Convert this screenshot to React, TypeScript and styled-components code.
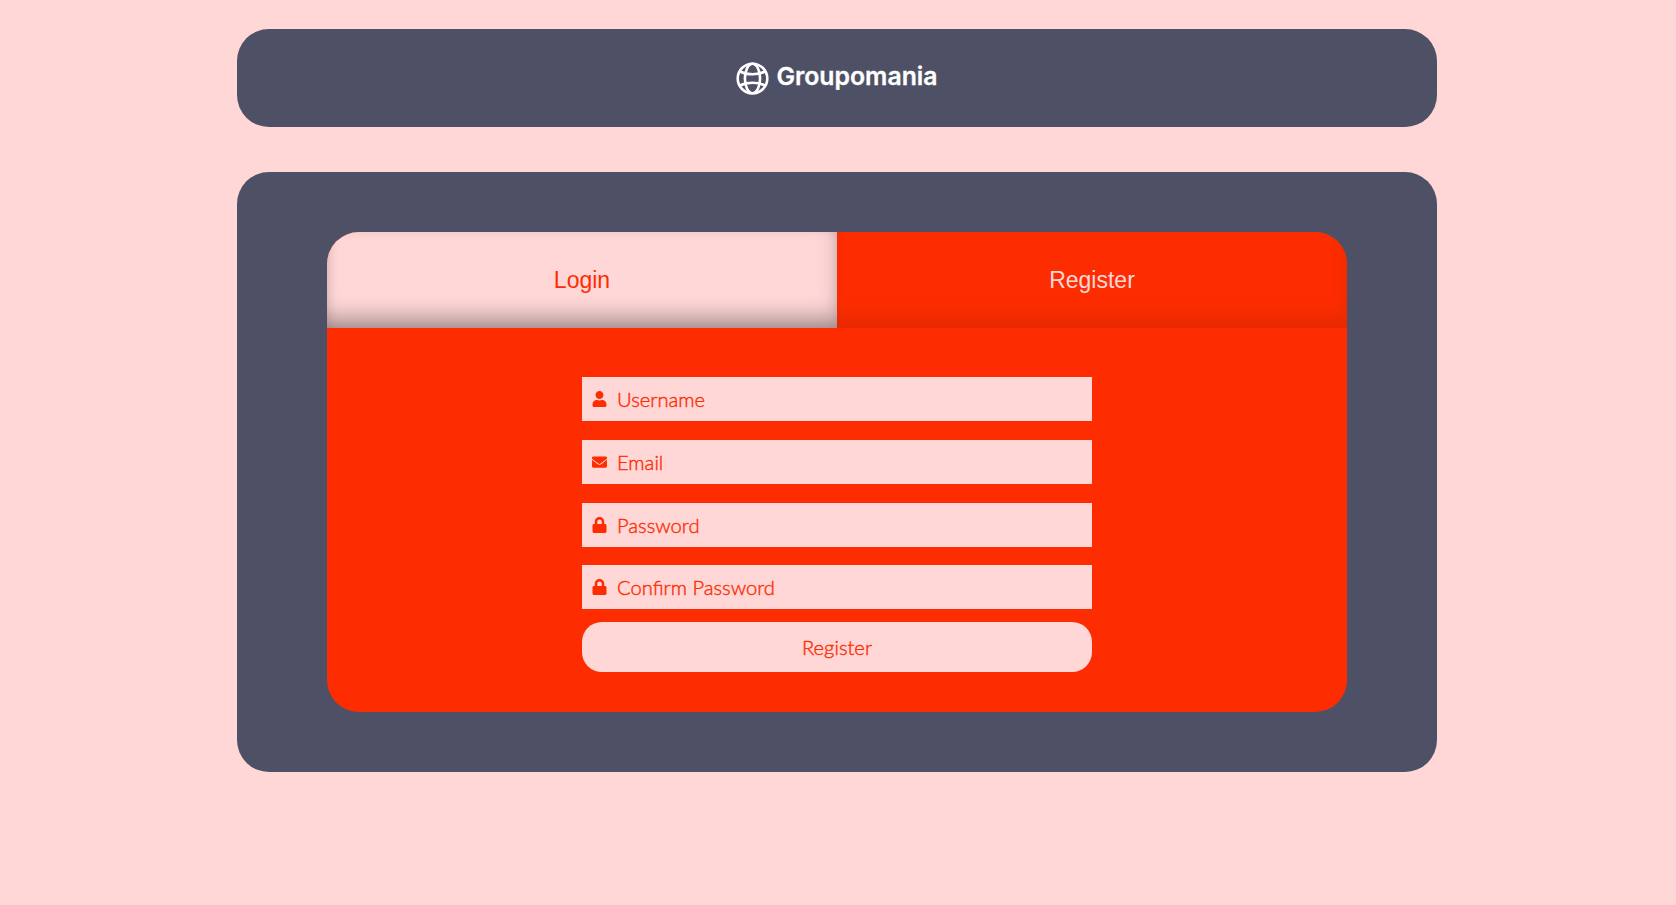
import { useState } from "react";
import styled, { createGlobalStyle } from "styled-components";
import { FaEnvelope, FaLock, FaUser } from "react-icons/fa";

const PRIMARY = "#fd2d01";
const SECONDARY = "#ffd7d7";
const TERTIARY = "#4e5166";

const GlobalStyle = createGlobalStyle`
  html, body {
    margin: 0;
    padding: 0;
    background: ${SECONDARY};
    font-family: "Lato", "Liberation Sans", sans-serif;
  }
  * {
    box-sizing: border-box;
  }
`;

const Page = styled.div`
  width: 1200px;
  margin: 0 0 0 237px;
  padding: 29px 0 0;
`;

const Header = styled.header`
  height: 98px;
  margin-bottom: 45px;
  display: flex;
  align-items: center;
  justify-content: center;
  gap: 7px;
  background: ${TERTIARY};
  border-radius: 32px;
`;

const Brand = styled.span`
  color: #fff;
  font: 600 24.8px "Inter", sans-serif;
  -webkit-text-stroke: 0.3px #fff;
  margin-top: -4px;
`;

const Main = styled.main`
  height: 600px;
  padding: 60px 90px;
  background: ${TERTIARY};
  border-radius: 32px;
`;

const Panel = styled.section`
  height: 480px;
  display: flex;
  flex-direction: column;
  background: ${PRIMARY};
  border-radius: 32px;
  overflow: hidden;
`;

const Tabs = styled.div`
  display: grid;
  grid-template-columns: 1fr 1fr;
  height: 96px;
  flex: none;
`;

const Tab = styled.button<{ $active: boolean }>`
  border: 0;
  padding: 0;
  font: 23px "Liberation Sans", Arial, sans-serif;
  cursor: pointer;
  color: ${(p) => (p.$active ? SECONDARY : PRIMARY)};
  background: ${(p) => (p.$active ? PRIMARY : SECONDARY)};
  box-shadow: inset -4px -18px 22px -8px
      rgba(0, 0, 0, ${(p) => (p.$active ? 0.1 : 0.34)}),
    inset 3px 0 12px -3px rgba(0, 0, 0, ${(p) => (p.$active ? 0.01 : 0.16)});
`;

const Form = styled.form`
  width: 510px;
  margin: 0 auto;
  padding-top: 49px;
  display: flex;
  flex-direction: column;
`;

const Field = styled.label`
  height: 44px;
  margin-bottom: 18.8px;
  display: flex;
  align-items: center;
  gap: 10px;
  padding-left: 10px;
  background: ${SECONDARY};
  color: ${PRIMARY};

  svg {
    flex: none;
    width: 15px;
    height: 16px;
  }

  &:nth-of-type(4) {
    margin-bottom: 13px;
  }
`;

const Input = styled.input`
  flex: 1;
  min-width: 0;
  height: 100%;
  border: 0;
  outline: 0;
  padding: 0;
  background: transparent;
  color: ${PRIMARY};
  font: 300 20.2px "Lato", sans-serif;
  -webkit-text-stroke: 0.4px ${PRIMARY};

  &::placeholder {
    color: ${PRIMARY};
    opacity: 1;
  }
`;

const Submit = styled.button`
  height: 50px;
  border: 0;
  border-radius: 20px;
  background: ${SECONDARY};
  color: ${PRIMARY};
  font: 300 20.2px "Lato", sans-serif;
  -webkit-text-stroke: 0.4px ${PRIMARY};
  cursor: pointer;
`;

function Globe() {
  return (
    <svg
      width="33"
      height="33"
      viewBox="0 0 33 33"
      fill="none"
      stroke="#fff"
      strokeWidth="2.6"
      aria-hidden="true"
    >
      <circle cx="16.5" cy="16.5" r="14.8" />
      <ellipse cx="16.5" cy="16.5" rx="7.6" ry="14.8" />
      <path d="M4 9.5c7 3.6 18 3.6 25 0" />
      <path d="M4 23.5c7-3.6 18-3.6 25 0" />
    </svg>
  );
}

const FIELDS = [
  { name: "username", type: "text", label: "Username", Icon: FaUser },
  { name: "email", type: "email", label: "Email", Icon: FaEnvelope },
  { name: "password", type: "password", label: "Password", Icon: FaLock },
  { name: "confirm", type: "password", label: "Confirm Password", Icon: FaLock },
];

export default function App() {
  const [tab] = useState("register");
  return (
    <>
      <GlobalStyle />
      <Page>
        <Header>
          <Globe />
          <Brand>Groupomania</Brand>
        </Header>
        <Main>
          <Panel>
            <Tabs>
              <Tab type="button" $active={tab === "login"}>
                Login
              </Tab>
              <Tab type="button" $active={tab === "register"}>
                Register
              </Tab>
            </Tabs>
            <Form>
              {FIELDS.map(({ name, type, label, Icon }) => (
                <Field key={name}>
                  <Icon />
                  <Input name={name} type={type} placeholder={label} />
                </Field>
              ))}
              <Submit type="button">Register</Submit>
            </Form>
          </Panel>
        </Main>
      </Page>
    </>
  );
}
